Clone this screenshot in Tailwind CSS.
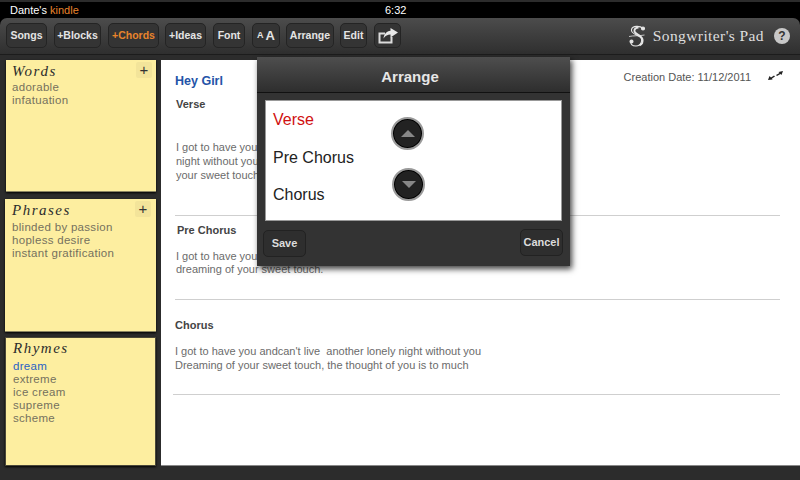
<!DOCTYPE html>
<html lang="en">
  <head>
    <meta charset="UTF-8" />
    <title>Songwriter's Pad</title>
    <script src="https://cdn.jsdelivr.net/npm/@tailwindcss/browser@4"></script>
  </head>
  <body class="w-[800px] h-[480px] overflow-hidden bg-[#2c2c2c] font-['Liberation_Sans',sans-serif]">
    <div class="relative flex flex-col h-[480px]">
      <!-- Status bar -->
      <div class="h-[16px] mt-[2px] bg-black text-white text-[11px] leading-[16px] flex px-[10px]">
        <div class="w-[375px]">Dante's <span class="text-[#e8842c]">kindle</span></div>
        <div>6:32</div>
      </div>

      <!-- Toolbar -->
      <div class="h-[37px] bg-black">
        <div class="h-[37px] rounded-t-[7px] bg-gradient-to-b from-[#4c4c4c] to-[#2f2f2f] border-b border-[#1c1c1c] flex items-center pl-[6px] pb-[1px] text-[10.5px] font-bold text-[#e4e4e4]">
          <div class="w-[41px] h-[25px] flex items-center justify-center rounded-[5px] bg-[#343434] border border-[#242424]">Songs</div>
          <div class="ml-[7px] w-[47px] h-[25px] flex items-center justify-center rounded-[5px] bg-[#343434] border border-[#242424]">+Blocks</div>
          <div class="ml-[7px] w-[51px] h-[25px] flex items-center justify-center rounded-[5px] bg-[#343434] border border-[#242424] text-[#e8842c]">+Chords</div>
          <div class="ml-[6px] w-[41px] h-[25px] flex items-center justify-center rounded-[5px] bg-[#343434] border border-[#242424]">+Ideas</div>
          <div class="ml-[7px] w-[32px] h-[25px] flex items-center justify-center rounded-[5px] bg-[#343434] border border-[#242424]">Font</div>
          <div class="ml-[7px] w-[28px] h-[25px] flex items-center justify-center gap-[2px] rounded-[5px] bg-[#343434] border border-[#242424]"><span class="text-[9px]">A</span><span class="text-[13px]">A</span></div>
          <div class="ml-[6px] w-[48px] h-[25px] flex items-center justify-center rounded-[5px] bg-[#343434] border border-[#242424]">Arrange</div>
          <div class="ml-[6px] w-[27px] h-[25px] flex items-center justify-center rounded-[5px] bg-[#343434] border border-[#242424]">Edit</div>
          <div class="ml-[7px] w-[27px] h-[25px] flex items-center justify-center rounded-[5px] bg-[#343434] border border-[#242424]">
            <svg width="20" height="16" viewBox="0 0 20 16" fill="none">
              <path d="M13.5 9V14.5H1.5V5.5H7" stroke="#dcdcdc" stroke-width="2" />
              <path d="M12.5 0L20 4.5L12.5 9.5V6.5C9.5 6.5 7.5 7.5 5.5 10.5C6 6.5 8.5 3 12.5 2.8Z" fill="#e8e8e8" />
            </svg>
          </div>
          <div class="ml-auto flex items-center text-[#dedede] font-normal">
            <svg width="18" height="22" viewBox="0 0 18 22" fill="none" stroke="#e6e6e6" stroke-width="1.1">
              <path d="M15 3.5C12 0.5 4.5 0.5 3.5 4.5C2.5 8.5 8 9.5 11.5 11.5C15.5 14 13.5 21 8 21C4 21 2 19 3 16" />
              <path d="M10.5 2.5C7.5 2.5 6 4.5 6.5 6.5C7.2 9.5 13.5 10 14.5 14.5C15 17 13.5 19.5 11.5 20.5" stroke-width="1.9" />
              <path d="M1 11.5C5 10.5 12 11 16.5 10" stroke-width="0.8" />
              <circle cx="15" cy="3.5" r="1.5" fill="#e6e6e6" />
              <circle cx="3.5" cy="16.5" r="1.5" fill="#e6e6e6" />
            </svg>
            <div class="ml-[7px] font-['Liberation_Serif',serif] text-[15.5px] tracking-[0.4px]">Songwriter's Pad</div>
            <div class="ml-[10px] mr-[10px] w-[16px] h-[16px] rounded-full bg-[#c8c8c8] text-[#333] text-[12px] font-bold flex items-center justify-center">?</div>
          </div>
        </div>
      </div>

      <!-- Main area -->
      <div class="flex h-[406px] mt-[5px]">
        <!-- Sticky notes -->
        <div class="w-[161px] shrink-0 pl-[5px] flex flex-col text-[11.5px] tracking-[0.3px] leading-[13px] text-[#75715e]">
          <div class="relative ml-[1px] w-[150px] h-[132px] bg-[#fdeea0] border-b border-[#8a8461] shadow-[0_1px_2px_#000] pl-[6px] pt-[2px]">
            <div class="font-['Liberation_Serif',serif] italic text-[15px] leading-[19px] tracking-[1.5px] text-[#2c2c2c]">Words</div>
            <div>adorable</div>
            <div>infatuation</div>
            <div class="absolute top-[2px] right-[4px] w-[16px] h-[16px] rounded-[2px] bg-[#f3e49a] text-[#333] text-[15px] leading-[15px] text-center">+</div>
          </div>
          <div class="relative mt-[7px] w-[151px] h-[133px] bg-[#fdeea0] border-b border-[#8a8461] shadow-[0_1px_2px_#000] pl-[7px] pt-[2px]">
            <div class="font-['Liberation_Serif',serif] italic text-[15px] leading-[19px] tracking-[1.5px] text-[#2c2c2c]">Phrases</div>
            <div class="mt-[1px]">blinded by passion</div>
            <div>hopless desire</div>
            <div>instant gratification</div>
            <div class="absolute top-[2px] right-[5px] w-[16px] h-[16px] rounded-[2px] bg-[#f3e49a] text-[#333] text-[15px] leading-[15px] text-center">+</div>
          </div>
          <div class="mt-[5px] w-[151px] h-[129px] bg-[#fdeea0] border border-[#4a4738] shadow-[0_1px_2px_#000] pl-[7px] pt-[1px]">
            <div class="font-['Liberation_Serif',serif] italic text-[15px] leading-[19px] tracking-[1.5px] text-[#2c2c2c]">Rhymes</div>
            <div class="mt-[2px] text-[#2a62c4]">dream</div>
            <div>extreme</div>
            <div>ice cream</div>
            <div>supreme</div>
            <div>scheme</div>
          </div>
        </div>

        <!-- Song sheet -->
        <div class="relative w-[639px] bg-white border-b border-[#888] pl-[14px] pr-[20px] text-[11px] leading-[14px] text-[#6b6b6b]">
          <div class="flex items-start pt-[13px] h-[37px]">
            <div class="text-[12.5px] font-bold text-[#2453a8] leading-[16px]">Hey Girl</div>
            <div class="ml-auto pr-[29px] mt-[-3px] text-[#555]">Creation Date: 11/12/2011</div>
            <svg class="absolute right-[17px] top-[11px]" width="15" height="9" viewBox="0 0 15 9" fill="#222">
              <path d="M0 9L1.5 5L3 6.5L6 4.5L7 5.5L4 7.5L4.5 8.5Z" />
              <path d="M15 0L10.5 1L11.5 2L8 4L9 5L12.5 3L13.5 4Z" />
            </svg>
          </div>
          <div class="pl-[1px] font-bold text-[#444]">Verse</div>
          <div class="mt-[29px] pl-[1px] whitespace-nowrap">
            <div>I got to have you</div>
            <div>night without you</div>
            <div>your sweet touch</div>
          </div>
          <div class="mt-[33px] border-t border-[#cfcfcf]"></div>
          <div class="mt-[7px] pl-[2px] font-bold text-[#444]">Pre Chorus</div>
          <div class="mt-[13px] pl-[1px] leading-[13px]">
            <div>I got to have you</div>
            <div>dreaming of your sweet touch.</div>
          </div>
          <div class="mt-[23px] border-t border-[#cfcfcf]"></div>
          <div class="mt-[18px] font-bold text-[#444]">Chorus</div>
          <div class="mt-[12px]">
            <div class="whitespace-pre">I got to have you andcan't live  another lonely night without you</div>
            <div>Dreaming of your sweet touch, the thought of you is to much</div>
          </div>
          <div class="mt-[22px] -ml-[2px] border-t border-[#cfcfcf]"></div>
        </div>
      </div>

      <!-- Arrange dialog -->
      <div class="absolute left-[257px] top-[57px] w-[313px] h-[209px] bg-[#333] shadow-[2px_3px_6px_rgba(0,0,0,0.75)]">
        <div class="h-[36px] pr-[7px] bg-gradient-to-b from-[#4e4e4e] to-[#2e2e2e] border-b border-[#111] text-center text-[15px] leading-[40px] font-bold text-[#e6e6e6]">Arrange</div>
        <div class="mt-[7px] mx-[8px] h-[121px] bg-white border border-[#999] flex pl-[7px] text-[16px] text-[#222]">
          <div class="w-[118px] leading-[37.5px]">
            <div class="text-[#d01010]">Verse</div>
            <div>Pre Chorus</div>
            <div>Chorus</div>
          </div>
          <div class="flex flex-col pt-[16px] gap-[18px]">
            <div class="w-[33px] h-[33px] rounded-full bg-[#222] border-2 border-[#9a9a9a] flex items-center justify-center shadow-[inset_0_0_0_1px_#000]">
              <svg width="16" height="9" viewBox="0 0 16 9"><path d="M8 1L15 8H1Z" fill="#888" /></svg>
            </div>
            <div class="ml-[1px] w-[33px] h-[33px] rounded-full bg-[#222] border-2 border-[#9a9a9a] flex items-center justify-center shadow-[inset_0_0_0_1px_#000]">
              <svg width="16" height="9" viewBox="0 0 16 9"><path d="M1 1H15L8 8Z" fill="#888" /></svg>
            </div>
          </div>
        </div>
        <div class="mt-[8px] mx-[6px] flex justify-between text-[11px] font-bold text-[#dcdcdc]">
          <div class="w-[43px] h-[27px] mt-[1px] flex items-center justify-center rounded-[5px] bg-[#2e2e2e] border border-[#222]">Save</div>
          <div class="w-[43px] h-[27px] mr-[1px] flex items-center justify-center rounded-[5px] bg-[#2e2e2e] border border-[#222]">Cancel</div>
        </div>
      </div>
    </div>
  </body>
</html>
